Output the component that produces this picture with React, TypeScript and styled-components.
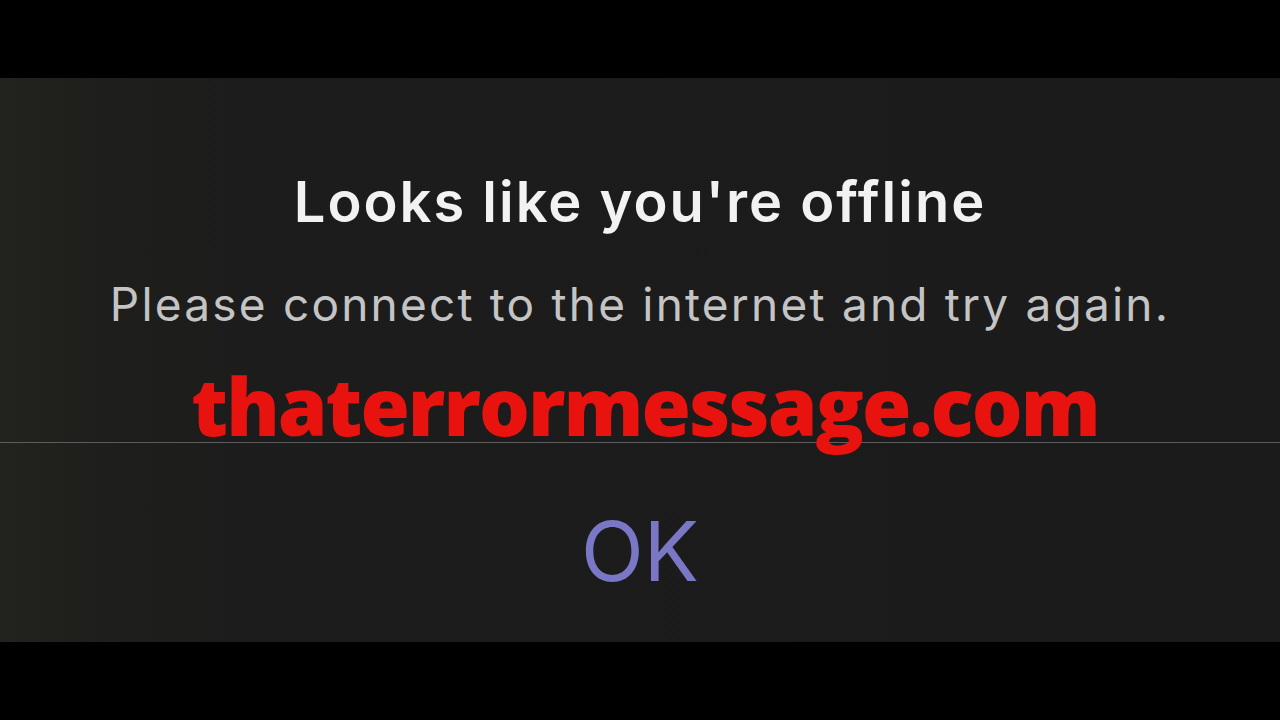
import styled, { createGlobalStyle } from "styled-components";

const GlobalStyle = createGlobalStyle`
  html, body {
    margin: 0;
    padding: 0;
    background: #000;
  }
  body {
    font-family: "Inter", "Liberation Sans", sans-serif;
  }
`;

const Screen = styled.div`
  width: 1280px;
  height: 720px;
  display: flex;
  flex-direction: column;
  background: #000;
  overflow: hidden;
`;

const Bar = styled.div`
  height: 78px;
  flex: 0 0 78px;
  background: #000;
`;

const Panel = styled.div`
  flex: 1;
  display: flex;
  flex-direction: column;
  align-items: center;
  background: linear-gradient(90deg, #22221e 0%, #1e1e1c 8%, #1c1c1c 20%, #1b1b1b 100%);
`;

const Message = styled.div`
  display: flex;
  flex-direction: column;
  align-items: center;
  padding-top: 96px;
  width: 100%;
`;

const Title = styled.h1`
  margin: 0;
  font-size: 56px;
  line-height: 1;
  font-weight: 600;
  color: #f2f2f2;
  letter-spacing: 2px;
  white-space: nowrap;
`;

const Subtitle = styled.p`
  margin: 51px 0 0;
  font-size: 46px;
  line-height: 1;
  font-weight: 400;
  color: #c4c4c4;
  letter-spacing: 2.2px;
  white-space: nowrap;
`;

const Watermark = styled.div`
  margin: 43px 0 0 10px;
  height: 70px;
  font-family: "Open Sans", "Liberation Sans", sans-serif;
  font-size: 80px;
  line-height: 70px;
  font-weight: 800;
  color: #e8120f;
  letter-spacing: -2px;
  white-space: nowrap;
  position: relative;
  z-index: 1;
`;

const Divider = styled.div`
  width: 100%;
  height: 1px;
  background: #5c5c5c;
  margin-top: 2px;
`;

const OkButton = styled.button`
  margin-top: 68px;
  padding: 0;
  border: none;
  background: none;
  font-family: "Inter", "Liberation Sans", sans-serif;
  font-size: 82px;
  line-height: 1;
  font-weight: 400;
  color: #7a78c6;
  cursor: pointer;
`;

export default function App() {
  return (
    <>
      <GlobalStyle />
      <Screen>
        <Bar />
        <Panel>
          <Message>
            <Title>Looks like you're offline</Title>
            <Subtitle>Please connect to the internet and try again.</Subtitle>
            <Watermark>thaterrormessage.com</Watermark>
          </Message>
          <Divider />
          <OkButton>OK</OkButton>
        </Panel>
        <Bar />
      </Screen>
    </>
  );
}
